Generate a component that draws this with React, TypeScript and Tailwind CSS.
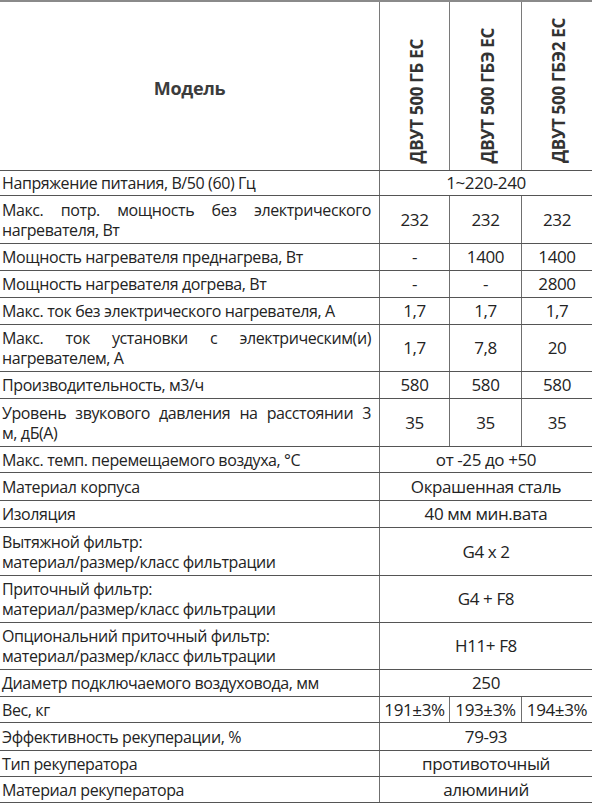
import React from 'react';

type Row = {
  label: string[];
  justify?: boolean;
  values: string | string[];
  h: number;
};

const rows: Row[] = [
  { label: ['Напряжение питания, В/50 (60) Гц'], values: '1~220-240', h: 25 },
  { label: ['Макс. потр. мощность без электрического', 'нагревателя, Вт'], justify: true, values: ['232', '232', '232'], h: 48 },
  { label: ['Мощность нагревателя преднагрева, Вт'], values: ['-', '1400', '1400'], h: 27 },
  { label: ['Мощность нагревателя догрева, Вт'], values: ['-', '-', '2800'], h: 27 },
  { label: ['Макс. ток без электрического нагревателя, А'], values: ['1,7', '1,7', '1,7'], h: 27 },
  { label: ['Макс. ток установки с электрическим(и)', 'нагревателем, А'], justify: true, values: ['1,7', '7,8', '20'], h: 47 },
  { label: ['Производительность, м3/ч'], values: ['580', '580', '580'], h: 27 },
  { label: ['Уровень звукового давления на расстоянии 3', 'м, дБ(А)'], justify: true, values: ['35', '35', '35'], h: 48 },
  { label: ['Макс. темп. перемещаемого воздуха, °С'], values: 'от -25 до +50', h: 26 },
  { label: ['Материал корпуса'], values: 'Окрашенная сталь', h: 28 },
  { label: ['Изоляция'], values: '40 мм мин.вата', h: 27 },
  { label: ['Вытяжной фильтр:', 'материал/размер/класс фильтрации'], values: 'G4 x 2', h: 48 },
  { label: ['Приточный фильтр:', 'материал/размер/класс фильтрации'], values: 'G4 + F8', h: 47 },
  { label: ['Опциональний приточный фильтр:', 'материал/размер/класс фильтрации'], values: 'H11+ F8', h: 47 },
  { label: ['Диаметр подключаемого воздуховода, мм'], values: '250', h: 27 },
  { label: ['Вес, кг'], values: ['191±3%', '193±3%', '194±3%'], h: 26 },
  { label: ['Эффективность рекуперации, %'], values: '79-93', h: 28 },
  { label: ['Тип рекуператора'], values: 'противоточный', h: 26 },
  { label: ['Материал рекуператора'], values: 'алюминий', h: 26 },
];

const models = ['ДВУТ 500 ГБ ЕС', 'ДВУТ 500 ГБЭ ЕС', 'ДВУТ 500 ГБЭ2 ЕС'];
const colW = ['w-[70px]', 'w-[72px]', 'w-[71px]'];

// flex spreads the words over the full width, like the justified first line in the source
function JustLine({ text }: { text: string }) {
  return (
    <span className="flex justify-between">
      {text.split(' ').map((w, i) => (
        <span key={i}>{w}</span>
      ))}
    </span>
  );
}

function Label({ row }: { row: Row }) {
  return (
    <div className="w-[379px] shrink-0 pl-[2px] pr-[8px] flex flex-col justify-center leading-[20px]">
      {row.label.map((line, i) => (
        <div key={i} className="whitespace-nowrap">
          {row.justify && i === 0 ? <JustLine text={line} /> : line}
        </div>
      ))}
    </div>
  );
}

export default function App() {
  return (
    <div className="w-[592px] h-[806px] bg-white overflow-hidden font-['Open_Sans',sans-serif] text-[16px] tracking-[-0.4px] text-[#232323]">
      <div className="border-t-2 border-[#8a8a8a]">
        {/* header */}
        <div className="flex h-[169px] border-b border-[#555]">
          <div className="w-[379px] shrink-0 flex items-center justify-center pt-[4px] font-bold text-[18px] text-[#3c3c3c] tracking-[-0.3px]">
            Модель
          </div>
          {models.map((m, i) => (
            <div
              key={m}
              className={`${colW[i]} shrink-0 border-l border-[#7a7a7a] flex items-end justify-center pb-[7px]`}
            >
              <span className="[writing-mode:vertical-rl] rotate-180 font-bold text-[17px] tracking-[-0.3px] text-[#333] leading-none pr-[3px]">
                {m}
              </span>
            </div>
          ))}
        </div>

        {rows.map((row, r) => (
          <div
            key={r}
            className="flex border-b border-[#555]"
            style={{ height: row.h }}
          >
            <Label row={row} />
            {typeof row.values === 'string' ? (
              <div className="w-[213px] shrink-0 border-l border-[#6f6f6f] flex items-center justify-center text-[17px]">
                {row.values}
              </div>
            ) : (
              row.values.map((v, i) => (
                <div
                  key={i}
                  className={`${colW[i]} shrink-0 border-l border-[#6f6f6f] flex items-center justify-center whitespace-nowrap text-[17px]`}
                >
                  {v}
                </div>
              ))
            )}
          </div>
        ))}
      </div>
    </div>
  );
}
